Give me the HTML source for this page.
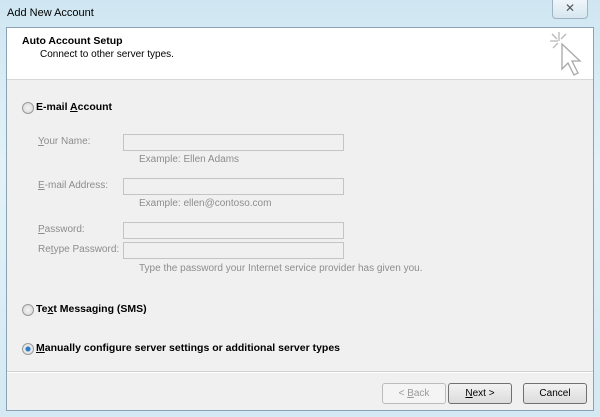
<!DOCTYPE html>
<html><head><style>
body{margin:0;width:600px;height:417px;overflow:hidden;font-family:"Liberation Sans",sans-serif;font-size:10px;color:#000;
background:linear-gradient(180deg,#cfe6f2 0%,#e3f2f8 40%,#d4e9f3 100%);position:relative}
.a{position:absolute;white-space:nowrap}
.client{position:absolute;left:6px;top:27px;width:586px;height:382px;background:#f0f0f0;border:1px solid #8aa2b5}
.hdr{position:absolute;left:0;top:0;width:586px;height:51px;background:#fff;border-bottom:1px solid #d8d8d8}
.inp{position:absolute;left:116px;width:219px;height:15px;border:1px solid #c4c4c4;background:#f0f0f0}
.lbl{position:absolute;left:31px;color:#8d8d8d}
.ex{position:absolute;left:132px;color:#8d8d8d}
.rad{position:absolute;left:15px;width:10px;height:10px;border-radius:50%;border:1px solid #9a9a9a;background:radial-gradient(#f4f4f4,#d4d4d4)}
.b{font-weight:bold;position:absolute;left:29px;font-size:10.5px}
.btn{position:absolute;top:355px;height:19px;border:1px solid #707070;border-radius:3px;background:linear-gradient(#f2f2f2,#dcdcdc);text-align:center;line-height:19px}
u{text-decoration:underline}
</style></head><body>
<div class="a" style="left:7px;top:7px;font-size:11px">Add New Account</div>
<div class="a" style="left:552px;top:0;width:34px;height:18px;border:1px solid #9fb3c2;border-top:none;border-radius:0 0 4px 4px;background:linear-gradient(#eef6fa,#d6e6ef);text-align:center;line-height:17px;color:#555;font-size:12px">✕</div>
<div class="client">
 <div class="hdr">
  <div class="a" style="left:15px;top:7px;font-weight:bold;font-size:10.5px">Auto Account Setup</div>
  <div class="a" style="left:33px;top:21px">Connect to other server types.</div>
  <svg class="a" style="left:536px;top:2px" width="44" height="48" viewBox="0 0 44 48" fill="none" stroke="#b8b8b8" stroke-width="1.3">
   <path d="M16 2v9M7 11h8M9 4l5 5M23 4l-5 5M10 18l5-5"/>
   <path d="M19 14l0 25 6-6 6 12 4-2-6-12 8 0z" stroke="#a8a8a8" fill="#fff"/>
  </svg>
 </div>
 <div class="rad" style="top:74px"></div><div class="b" style="top:73px">E-mail <u>A</u>ccount</div>
 <div class="lbl" style="top:108px"><u>Y</u>our Name:</div><div class="inp" style="top:106px"></div>
 <div class="ex" style="top:126px">Example: Ellen Adams</div>
 <div class="lbl" style="top:152px"><u>E</u>-mail Address:</div><div class="inp" style="top:150px"></div>
 <div class="ex" style="top:170px">Example: ellen@contoso.com</div>
 <div class="lbl" style="top:196px"><u>P</u>assword:</div><div class="inp" style="top:194px"></div>
 <div class="lbl" style="top:216px">Re<u>t</u>ype Password:</div><div class="inp" style="top:214px"></div>
 <div class="ex" style="top:235px">Type the password your Internet service provider has given you.</div>
 <div class="rad" style="top:276px"></div><div class="b" style="top:275px">Te<u>x</u>t Messaging (SMS)</div>
 <div class="rad" style="top:315px;background:radial-gradient(#2a7bc8 0 2px,#e8e8e8 3px)"></div><div class="b" style="top:314px"><u>M</u>anually configure server settings or additional server types</div>
 <div class="a" style="left:0;top:343px;width:586px;height:1px;background:#d0d0d0;border-bottom:1px solid #fff"></div>
 <div class="btn" style="left:375px;width:62px;color:#9a9a9a;border-color:#bcbcbc;background:#f4f4f4">&lt; <u>B</u>ack</div>
 <div class="btn" style="left:441px;width:62px"><u>N</u>ext &gt;</div>
 <div class="btn" style="left:516px;width:62px">Cancel</div>
</div>
</body></html>
